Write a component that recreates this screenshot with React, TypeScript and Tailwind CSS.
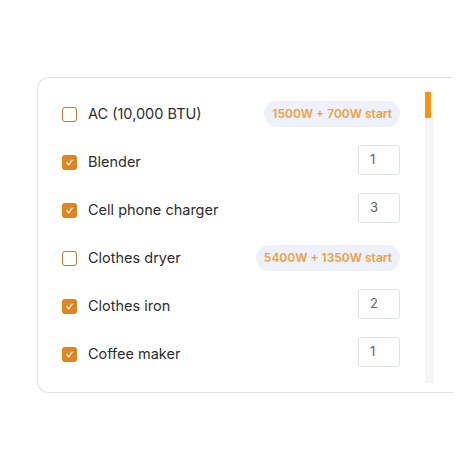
import React from 'react'

interface Appliance {
  name: string
  checked: boolean
  qty?: number
  badge?: string
}

const items: Appliance[] = [
  { name: 'AC (10,000 BTU)', checked: false, badge: '1500W + 700W start' },
  { name: 'Blender', checked: true, qty: 1 },
  { name: 'Cell phone charger', checked: true, qty: 3 },
  { name: 'Clothes dryer', checked: false, badge: '5400W + 1350W start' },
  { name: 'Clothes iron', checked: true, qty: 2 },
  { name: 'Coffee maker', checked: true, qty: 1 }
]

const Check = ({ checked }: { checked: boolean }) =>
  checked ? (
    <span className="w-[15px] h-[15px] rounded-[3px] bg-[#e5831f] flex items-center justify-center flex-shrink-0">
      <svg width="9" height="9" viewBox="0 0 10 10" fill="none">
        <path d="M2.2 5.4 4.1 7.6 7.8 2.4" stroke="#fff" strokeWidth="1.6" strokeLinecap="round" strokeLinejoin="round" />
      </svg>
    </span>
  ) : (
    <span className="w-[15px] h-[15px] rounded-[3px] border-[1.5px] border-[#c8772c] bg-white flex-shrink-0" />
  )

export default function App() {
  return (
    <div className="w-[474px] h-[474px] bg-white pt-[77px] pl-[37px] font-['Inter',sans-serif]">
      <div className="w-[416px] h-[316px] border border-r-0 border-[#dfe3e8] rounded-l-xl flex pt-3">
        <div className="flex-1 flex flex-col pl-6 pr-[25px]">
          {items.map((item) => (
            <div key={item.name} className="h-[48px] flex items-center justify-between">
              <div className="flex items-center gap-[11px]">
                <Check checked={item.checked} />
                <span className="text-[14.5px] text-[#2b2d31]">{item.name}</span>
              </div>
              {item.badge ? (
                <span className="h-[26px] px-[8px] rounded-full bg-[#eef1fa] text-[#f0a03a] text-[12px] font-semibold flex items-center">
                  {item.badge}
                </span>
              ) : (
                <div className="w-[42px] h-[30px] mb-[5px] border border-[#dde1e6] rounded-[3px] flex items-center pl-[11px] text-[13px] text-[#606468]">
                  {item.qty}
                </div>
              )}
            </div>
          ))}
        </div>
        <div className="w-[9px] mr-[19px] mb-[9px] bg-[#f4f5f7] flex flex-col pt-[2px]">
          <div className="w-[6px] h-[26px] bg-[#f7930f] rounded-[1px]" />
        </div>
      </div>
    </div>
  )
}
